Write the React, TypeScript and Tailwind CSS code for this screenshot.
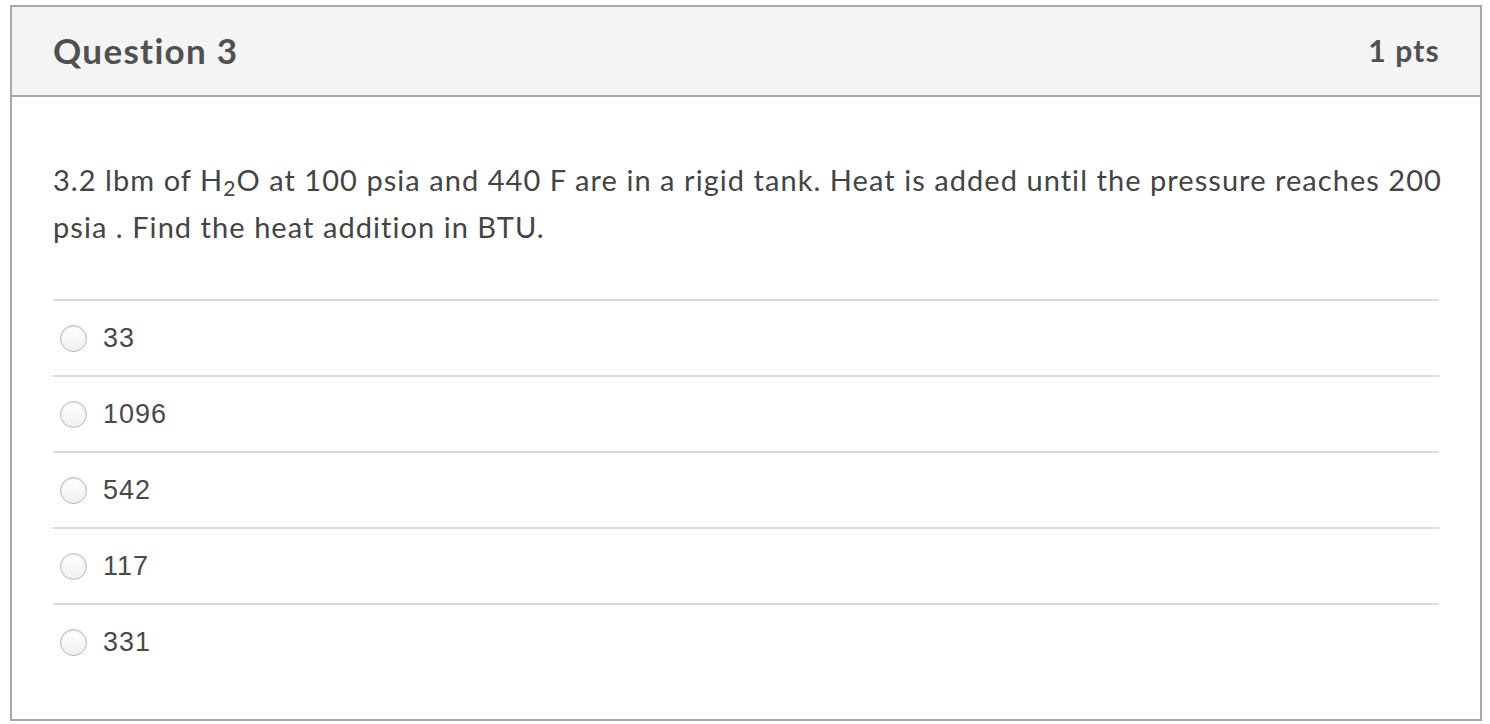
const options = ["33", "1096", "542", "117", "331"];

function Radio() {
  return (
    <span className="block h-[27px] w-[27px] shrink-0 rounded-full border border-[#b8b8b8] bg-gradient-to-b from-white to-[#f0f0f0] shadow-[inset_0_1px_2px_rgba(0,0,0,0.12)]" />
  );
}

export default function App() {
  return (
    <div className="min-h-[724px] bg-white pt-[5px] pl-[10px] pr-[8px] font-['Lato',sans-serif] [font-variant-ligatures:none]">
      <div className="border-2 border-[#a8a8a8]">
        <div className="flex h-[90px] items-center justify-between border-b-2 border-[#a8a8a8] bg-[#f4f4f4] pl-[41px] pr-[40px] pb-[2px]">
          <h2 className="text-[35px] font-bold tracking-[1.3px] text-[#505050]">Question 3</h2>
          <span className="text-[30px] font-bold tracking-[1.2px] text-[#505050]">1 pts</span>
        </div>
        <div className="px-[41px] pt-[59px] pb-[40px]">
          <p className="-mr-[10px] text-[29px] leading-[47px] tracking-[1.05px] text-[#444]">
            3.2 lbm of H<sub className="text-[21px] leading-none">2</sub>O at 100 psia and 440 F are in a rigid tank. Heat is added until the pressure reaches 200
            <br />
            psia . Find the heat addition in BTU.
          </p>
          <div className="mt-[49px]">
            {options.map((o) => (
              <label
                key={o}
                className="flex h-[76px] items-center gap-[16px] border-t-2 border-[#dddddd] pl-[7px]"
              >
                <Radio />
                <span className="font-['Liberation_Sans',sans-serif] text-[27px] tracking-[1px] text-[#4a4a4a]">{o}</span>
              </label>
            ))}
          </div>
        </div>
      </div>
    </div>
  );
}
